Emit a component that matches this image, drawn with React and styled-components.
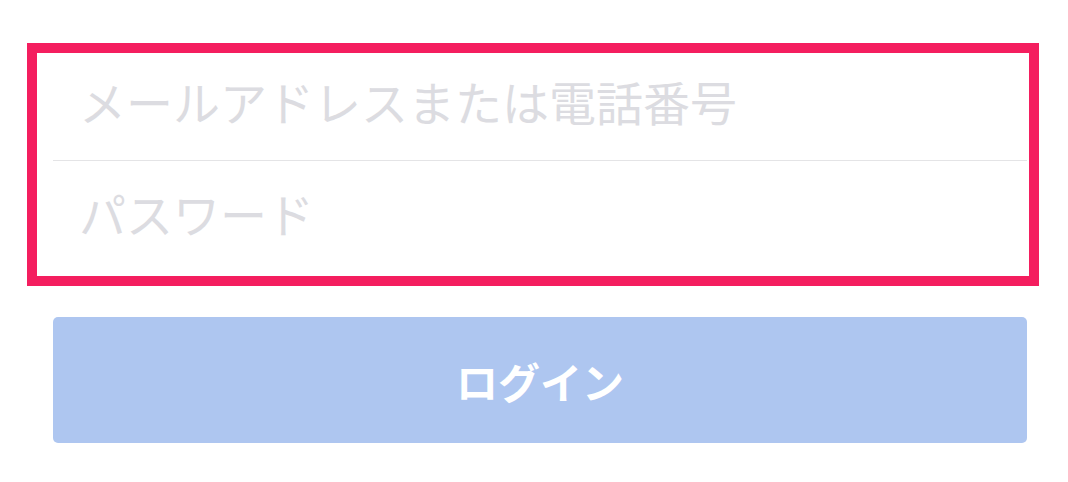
import React from 'react';
import styled, { createGlobalStyle } from 'styled-components';

const GlobalStyle = createGlobalStyle`
  html, body {
    margin: 0;
    padding: 0;
    background: #ffffff;
    font-family: "Noto Sans CJK JP", "Noto Sans", sans-serif;
  }
`;

const Page = styled.div`
  width: 1068px;
  height: 482px;
  padding-top: 43px;
  box-sizing: border-box;
  display: flex;
  flex-direction: column;
`;

const Highlight = styled.div`
  margin-left: 27px;
  width: 1012px;
  border: 10px solid #f41e5f;
  box-sizing: border-box;
  padding: 0 2px 0 16px;
`;

const Field = styled.div`
  display: flex;
  align-items: center;
  height: ${props => props.height}px;
  border-bottom: ${props => (props.last ? 'none' : '1px solid #e4e4e6')};
`;

const Input = styled.input`
  flex: 1;
  border: none;
  outline: none;
  background: transparent;
  padding: 0 0 12px 26px;
  font-family: "Noto Sans CJK JP", "Noto Sans", sans-serif;
  font-size: 47px;
  color: #333333;

  &::placeholder {
    color: #dcdce1;
  }
`;

const LoginButton = styled.button`
  margin: 31px 0 0 53px;
  width: 974px;
  height: 126px;
  border: none;
  border-radius: 5px;
  background: #aec6f0;
  color: #ffffff;
  font-family: "Noto Sans CJK JP", "Noto Sans", sans-serif;
  font-size: 42px;
  font-weight: 700;
  cursor: pointer;
`;

export default function App() {
  return (
    <>
      <GlobalStyle />
      <Page>
        <Highlight>
          <Field height={107}>
            <Input type='text' placeholder='メールアドレスまたは電話番号' />
          </Field>
          <Field height={115} last>
            <Input type='password' placeholder='パスワード' />
          </Field>
        </Highlight>
        <LoginButton>ログイン</LoginButton>
      </Page>
    </>
  );
}
